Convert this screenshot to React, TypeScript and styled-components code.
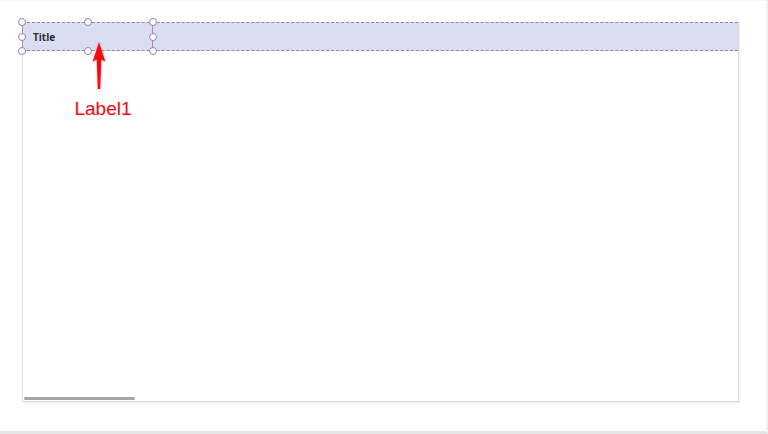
import React from "react";
import styled, { createGlobalStyle } from "styled-components";

const Global = createGlobalStyle`
  html, body { margin: 0; padding: 0; background: #ffffff; }
  #root { width: 768px; height: 434px; }
`;

const Page = styled.div`
  width: 768px;
  height: 434px;
  box-sizing: border-box;
  padding: 22px 0 0 22px;
  background: #ffffff;
  border-bottom: 3px solid #e4e4e4;
  border-right: 2px solid #f2f2f2;
  border-top: 1px solid #f4f4f4;
  font-family: "Liberation Sans", Arial, sans-serif;
`;

const Canvas = styled.div`
  position: relative;
  width: 717px;
  height: 380px;
  box-sizing: border-box;
  margin-top: -1px;
  display: flex;
  flex-direction: column;
  border-left: 1px solid #e2e2e2;
  border-right: 1px solid #dcdcdc;
  border-bottom: 1px solid #d8d8d8;
  box-shadow: 1px 1px 2px rgba(0, 0, 0, 0.08);
  background: #ffffff;
`;

const Header = styled.div`
  display: flex;
  align-items: stretch;
  height: 29px;
  flex: none;
  box-sizing: border-box;
  margin-left: -1px;
  background: #d9def0;
  border-top: 1px dashed #8f86a6;
  border-bottom: 1px dashed #8f86a6;
`;

const TitleControl = styled.div`
  position: relative;
  width: 131px;
  box-sizing: border-box;
  display: flex;
  align-items: center;
  padding-left: 10px;
  border-left: 1px solid #9d8fb5;
  border-right: 1px solid #9d8fb5;
  font-family: "Open Sans", "Liberation Sans", sans-serif;
  font-weight: 700;
  font-size: 10px;
  color: #2b2b3a;
`;

const Handle = styled.span<{ $x: string; $y: string }>`
  position: absolute;
  left: ${(p) => p.$x};
  top: ${(p) => p.$y};
  width: 8px;
  height: 8px;
  box-sizing: border-box;
  margin: -4px 0 0 -4px;
  border-radius: 50%;
  border: 1px solid #9a7fb0;
  background: #ffffff;
`;

const Body = styled.div`
  flex: 1;
`;

const Annotation = styled.div`
  position: absolute;
  left: 46px;
  top: 19px;
  width: 60px;
  display: flex;
  flex-direction: column;
  align-items: center;
`;

const Label = styled.div`
  margin: 7px 0 0 8px;
  color: #e8141b;
  font-family: "Liberation Sans", Arial, sans-serif;
  font-size: 19px;
  line-height: 22px;
  white-space: nowrap;
  text-shadow: 0 0 2px rgba(255, 120, 120, 0.35);
`;

const Scrollbar = styled.div`
  flex: none;
  width: 111px;
  height: 3px;
  margin: 0 0 1px 1px;
  border-radius: 2px;
  background: #a6a6a6;
`;

const handles: [string, string][] = [
  ["-1px", "-1px"],
  ["50%", "-1px"],
  ["calc(100% + 1px)", "-1px"],
  ["-1px", "14px"],
  ["calc(100% + 1px)", "14px"],
  ["-1px", "28px"],
  ["50%", "28px"],
  ["calc(100% + 1px)", "28px"],
];

export default function App() {
  return (
    <>
      <Global />
      <Page>
        <Canvas>
          <Header>
            <TitleControl>
              Title
              {handles.map(([x, y], i) => (
                <Handle key={i} $x={x} $y={y} />
              ))}
            </TitleControl>
          </Header>
          <Body />
          <Scrollbar />
          <Annotation>
            <svg width="16" height="50" viewBox="0 0 16 50">
              <defs>
                <filter id="g" x="-50%" y="-20%" width="200%" height="140%">
                  <feGaussianBlur stdDeviation="0.8" />
                </filter>
              </defs>
              <path
                d="M8 0 L15 21 L10.5 19 L9.5 49 L6.5 49 L5.5 19 L1 21 Z"
                fill="#ff8a8a"
                opacity="0.55"
                filter="url(#g)"
              />
              <path
                d="M8 1 L14.3 20.5 L10.3 18.6 L9.2 48 L6.8 48 L5.7 18.6 L1.7 20.5 Z"
                fill="#f20c12"
              />
            </svg>
            <Label>Label1</Label>
          </Annotation>
        </Canvas>
      </Page>
    </>
  );
}
